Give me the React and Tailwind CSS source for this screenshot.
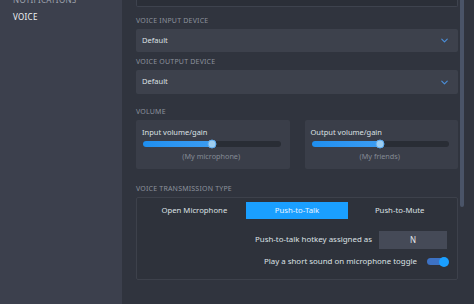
import { ChevronDown } from "lucide-react";

const font = { fontFamily: '"Noto Sans", "Open Sans", sans-serif' };

function Label({ children, className = "" }) {
  return (
    <div className={`text-[7px] leading-[10px] tracking-[0.2px] text-[#8c929d] uppercase ${className}`}>
      {children}
    </div>
  );
}

function Dropdown({ value, className = "" }) {
  return (
    <div className={`flex items-center justify-between bg-[#3d414c] rounded-[2px] pl-[6px] pr-[8px] ${className}`}>
      <span className="text-[7.5px] text-[#dce0e4]">{value}</span>
      <ChevronDown size={11} strokeWidth={2.5} className="text-[#4b8ed8]" />
    </div>
  );
}

function VolumeCard({ title, caption, value }) {
  return (
    <div className="h-[49px] bg-[#3a3e49] rounded-[2px] pl-[6px] pr-[9px] pt-[7px]">
      <div className="text-[7.5px] leading-[10px] text-[#dce0e4]">{title}</div>
      <div className="relative mt-[4px] ml-[1px] h-[6px] rounded-full bg-[#292d35]">
        <div
          className="h-full rounded-full bg-gradient-to-r from-[#1e8ff0] to-[#3a9cf2]"
          style={{ width: `${value}%` }}
        />
        <div
          className="absolute top-1/2 -translate-y-1/2 -translate-x-1/2 w-[9px] h-[9px] rounded-full bg-[#9ccdf0] border border-[#5aaaf0]"
          style={{ left: `${value}%` }}
        />
      </div>
      <div className="mt-[4px] text-center text-[7.25px] leading-[10px] text-[#858b95]">{caption}</div>
    </div>
  );
}

export default function App() {
  return (
    <div className="flex w-[474px] h-[304px] overflow-hidden bg-[#30343e]" style={font}>
      {/* Sidebar */}
      <aside className="w-[122px] shrink-0 bg-[#3c404d] pl-[13px]">
        <div className="-mt-[5px] text-[8px] leading-[10px] text-[#9ea3ad] tracking-[0.3px]">NOTIFICATIONS</div>
        <div className="mt-[7px] text-[8px] leading-[10px] text-[#f0f2f4] tracking-[0.3px]">VOICE</div>
      </aside>

      {/* Main */}
      <main className="relative flex-1 pl-[14px] pr-[16px]">
        <div className="h-[7px] rounded-b-[2px] border-x border-b border-[#3e434e] bg-[#2b2f38]" />

        <Label className="mt-[9px]">Voice Input Device</Label>
        <Dropdown value="Default" className="mt-[3px] h-[23px]" />

        <Label className="mt-[5px]">Voice Output Device</Label>
        <Dropdown value="Default" className="mt-[3px] h-[24px]" />

        <Label className="mt-[13px]">Volume</Label>
        <div className="mt-[3px] grid grid-cols-2 gap-[15px]">
          <VolumeCard title="Input volume/gain" caption="(My microphone)" value={50} />
          <VolumeCard title="Output volume/gain" caption="(My friends)" value={50} />
        </div>

        <Label className="mt-[15px]">Voice Transmission Type</Label>
        <div className="mt-[3px] h-[83px] border border-[#3d414b] rounded-[2px] bg-[#2e323b] px-[6px] pt-[4px]">
          <div className="grid grid-cols-3 h-[17px] text-[7.75px]">
            <div className="flex items-center justify-center text-[#dce0e4]">Open Microphone</div>
            <div className="flex items-center justify-center bg-[#1a9fff] text-[#e8f4ff]">Push-to-Talk</div>
            <div className="flex items-center justify-center text-[#dce0e4]">Push-to-Mute</div>
          </div>

          <div className="mt-[12px] flex items-center justify-end gap-[7px] pr-[4px]">
            <span className="text-[7.9px] text-[#dce0e4]">Push-to-talk hotkey assigned as</span>
            <div className="w-[68px] h-[18px] flex items-center justify-center bg-[#454a57] text-[8px] text-[#e4e7ea]">
              N
            </div>
          </div>

          <div className="mt-[7px] flex items-center justify-end gap-[10px] pr-[3px]">
            <span className="text-[7.9px] text-[#dce0e4]">Play a short sound on microphone toggle</span>
            <div className="relative w-[21px] h-[7px] rounded-full bg-[#3d72c4]">
              <div className="absolute -right-[1px] top-1/2 -translate-y-1/2 w-[10px] h-[10px] rounded-full bg-[#1a9fff]" />
            </div>
          </div>
        </div>

        {/* scrollbar */}
        <div className="absolute top-0 right-[10px] w-[4px] h-[207px] rounded-b-full bg-[#4a5468]" />
      </main>
    </div>
  );
}
